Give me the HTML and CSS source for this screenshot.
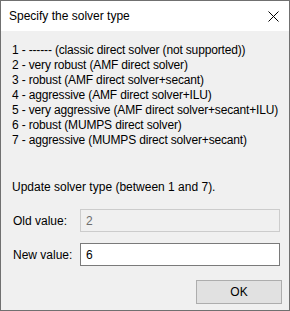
FILE: index.html
```html
<!DOCTYPE html>
<html lang="en">
<head>
  <meta charset="UTF-8" />
  <title>Specify the solver type</title>
  <link rel="stylesheet" href="styles.css">
</head>
<body>
  <div class="dialog">
    <div class="titlebar">
      <span class="title">Specify the solver type</span>
      <svg class="close" width="11" height="11" viewBox="0 0 11 11">
        <path d="M0.5 0.5 L10.5 10.5 M10.5 0.5 L0.5 10.5" stroke="#000" stroke-width="1" fill="none"/>
      </svg>
    </div>

    <div class="content">
      <div class="options">
        <div>1 - ------ (classic direct solver (not supported))</div>
        <div>2 - very robust (AMF direct solver)</div>
        <div>3 - robust (AMF direct solver+secant)</div>
        <div>4 - aggressive (AMF direct solver+ILU)</div>
        <div>5 - very aggressive (AMF direct solver+secant+ILU)</div>
        <div>6 - robust (MUMPS direct solver)</div>
        <div>7 - aggressive (MUMPS direct solver+secant)</div>
      </div>

      <div class="prompt">Update solver type (between 1 and 7).</div>

      <div class="field">
        <label for="oldValue">Old value:</label>
        <input type="text" id="oldValue" value="2" disabled />
      </div>
      <div class="field">
        <label for="newValue">New value:</label>
        <input type="text" id="newValue" value="6" />
      </div>

      <div class="actions">
        <button>OK</button>
      </div>
    </div>
  </div>
</body>
</html>
```

FILE: styles.css
```css
body {
  margin: 0;
  background: #f0f0f0;
  font-family: "Liberation Sans", Arial, sans-serif;
  font-size: 12px;
  color: #000;
}
.dialog {
  width: 290px;
  height: 311px;
  box-sizing: border-box;
  border: 1px solid #707070;
  background: #f0f0f0;
  display: flex;
  flex-direction: column;
}
.titlebar {
  height: 30px;
  flex: none;
  background: #fff;
  display: flex;
  align-items: center;
  justify-content: space-between;
  padding: 0 10px 0 8px;
}
.close {
  display: block;
}
.content {
  flex: 1;
  padding: 12px 9px 0 11px;
  display: flex;
  flex-direction: column;
}
.options {
  line-height: 15px;
  white-space: nowrap;
  letter-spacing: -0.16px;
}
.prompt {
  margin-top: 32px;
  line-height: 15px;
}
.field {
  display: flex;
  align-items: center;
  margin-top: 14px;
}
.field + .field {
  margin-top: 11px;
}
.field label {
  width: 67px;
  padding-left: 1px;
}
.field input {
  width: 200px;
  height: 23px;
  box-sizing: border-box;
  border: 1px solid #7a7a7a;
  background: #fff;
  padding: 0 5px;
  font-family: inherit;
  font-size: 12px;
  color: #000;
  outline: none;
}
.field input:disabled {
  border-color: #cccccc;
  background: #f0f0f0;
  color: #6d6d6d;
}
.actions {
  display: flex;
  justify-content: flex-end;
  margin-top: 14px;
}
button {
  width: 86px;
  height: 24px;
  margin-right: -2px;
  border: 1px solid #adadad;
  background: #e1e1e1;
  font-family: inherit;
  font-size: 12px;
  color: #000;
  padding: 0;
}
```
